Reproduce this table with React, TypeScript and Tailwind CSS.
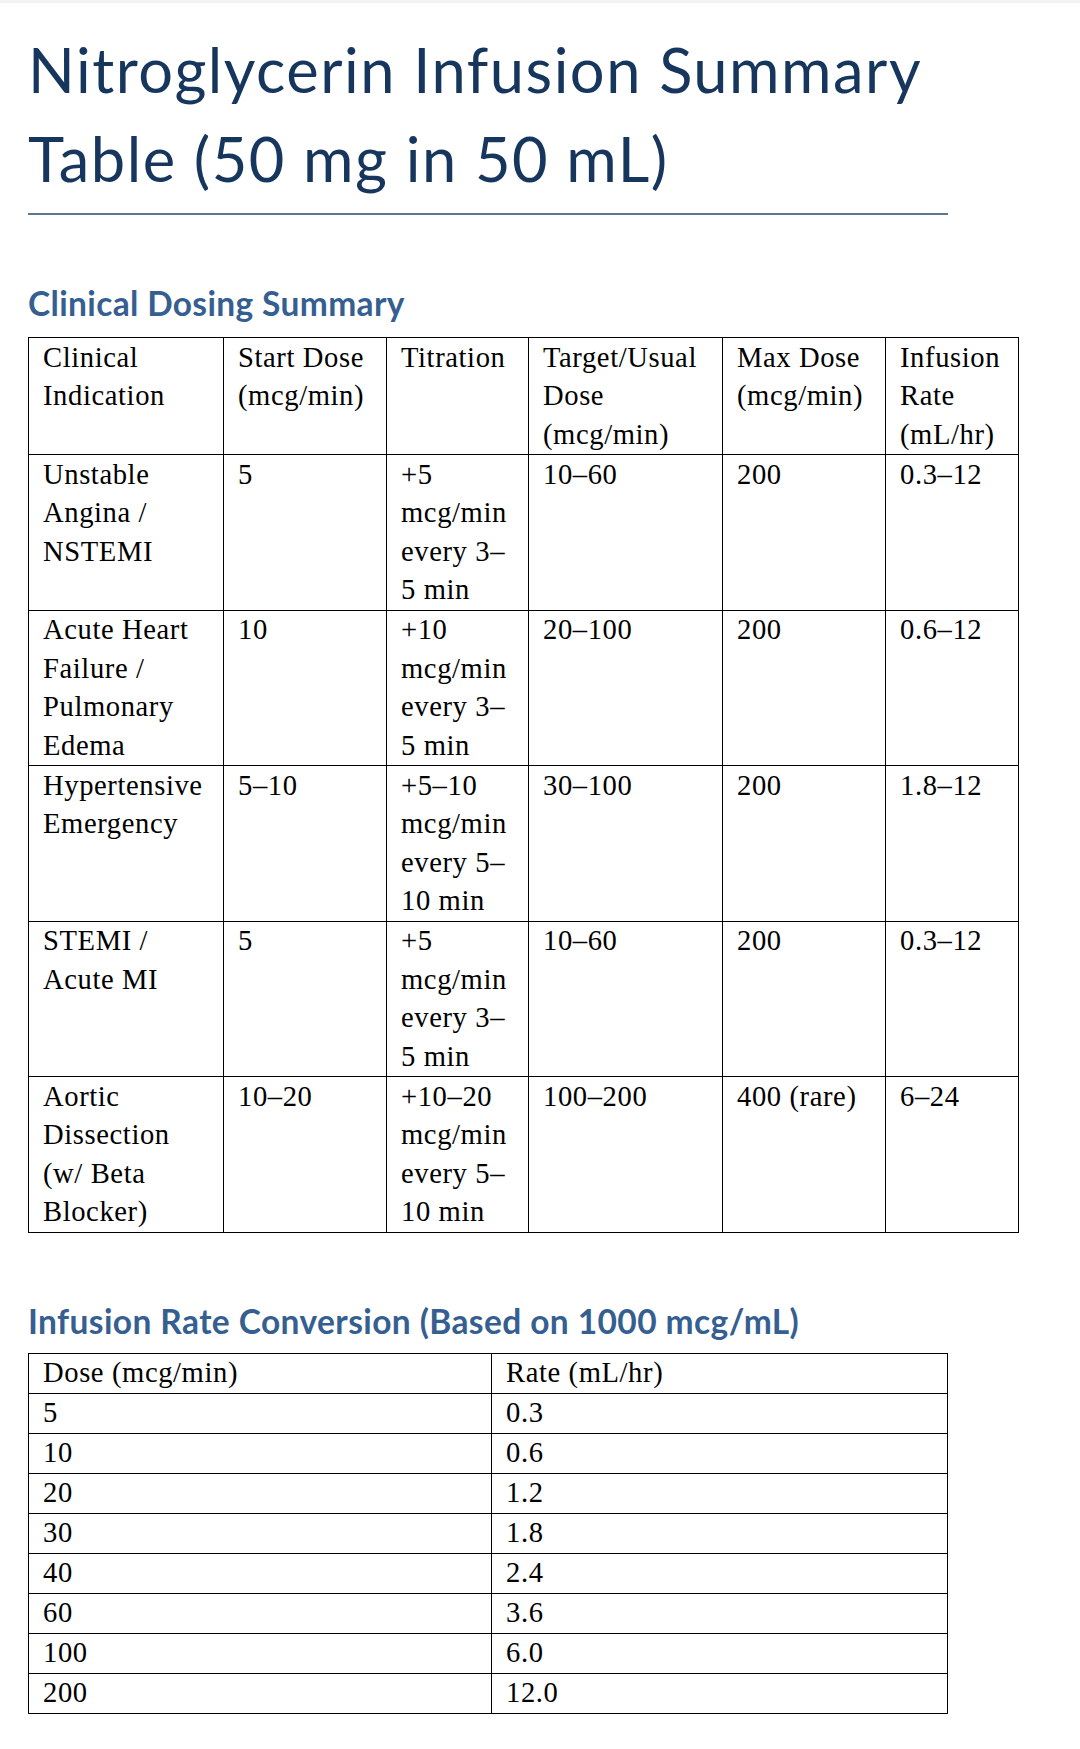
import React from "react";

// Clinical dosing rows: each cell is a list of lines as wrapped in the source doc
const dosingHeader = [
  ["Clinical", "Indication"],
  ["Start Dose", "(mcg/min)"],
  ["Titration"],
  ["Target/Usual", "Dose", "(mcg/min)"],
  ["Max Dose", "(mcg/min)"],
  ["Infusion", "Rate", "(mL/hr)"],
];

const dosingRows = [
  [
    ["Unstable", "Angina /", "NSTEMI"],
    ["5"],
    ["+5", "mcg/min", "every 3–", "5 min"],
    ["10–60"],
    ["200"],
    ["0.3–12"],
  ],
  [
    ["Acute Heart", "Failure /", "Pulmonary", "Edema"],
    ["10"],
    ["+10", "mcg/min", "every 3–", "5 min"],
    ["20–100"],
    ["200"],
    ["0.6–12"],
  ],
  [
    ["Hypertensive", "Emergency"],
    ["5–10"],
    ["+5–10", "mcg/min", "every 5–", "10 min"],
    ["30–100"],
    ["200"],
    ["1.8–12"],
  ],
  [
    ["STEMI /", "Acute MI"],
    ["5"],
    ["+5", "mcg/min", "every 3–", "5 min"],
    ["10–60"],
    ["200"],
    ["0.3–12"],
  ],
  [
    ["Aortic", "Dissection", "(w/ Beta", "Blocker)"],
    ["10–20"],
    ["+10–20", "mcg/min", "every 5–", "10 min"],
    ["100–200"],
    ["400 (rare)"],
    ["6–24"],
  ],
];

const colWidths = ["w-[195px]", "w-[163px]", "w-[142px]", "w-[194px]", "w-[163px]", "w-[133px]"];

const conversion = [
  ["5", "0.3"],
  ["10", "0.6"],
  ["20", "1.2"],
  ["30", "1.8"],
  ["40", "2.4"],
  ["60", "3.6"],
  ["100", "6.0"],
  ["200", "12.0"],
];

const cellText =
  "font-['Liberation_Serif',serif] text-[28.6px] leading-[38.5px] tracking-[0.6px] text-black";

function Cell({ lines }: { lines: string[] }) {
  return (
    <td className={`border border-black align-top pl-[14px] pr-[4px] pt-[0.5px] pb-0 ${cellText}`}>
      {lines.map((l, i) => (
        <span key={i} className="block whitespace-nowrap">
          {l}
        </span>
      ))}
    </td>
  );
}

export default function App() {
  return (
    <main className="min-h-screen bg-white border-t-[3px] border-[#f3f3f3]">
      <div className="pl-[28px] pt-[22px]">
        {/* title */}
        <h1 className="w-[920px] border-b-2 border-[#5b7792] pb-[10px] font-['Lato',sans-serif] text-[61.4px] leading-[89px] tracking-[1.5px] text-[#17365d]">
          Nitroglycerin Infusion Summary Table (50 mg in 50 mL)
        </h1>

        {/* clinical dosing */}
        <h2 className="mt-[68px] mb-[14px] font-['Lato',sans-serif] font-bold text-[33.5px] leading-[40px] tracking-[0.35px] text-[#365f91]">
          Clinical Dosing Summary
        </h2>
        <table className="table-fixed border-collapse w-[990px]">
          <colgroup>
            {colWidths.map((w, i) => (
              <col key={i} className={w} />
            ))}
          </colgroup>
          <thead>
            <tr>
              {dosingHeader.map((h, i) => (
                <Cell key={i} lines={h} />
              ))}
            </tr>
          </thead>
          <tbody>
            {dosingRows.map((row, r) => (
              <tr key={r}>
                {row.map((c, i) => (
                  <Cell key={i} lines={c} />
                ))}
              </tr>
            ))}
          </tbody>
        </table>

        {/* conversion */}
        <h2 className="mt-[68px] mb-[12px] font-['Lato',sans-serif] font-bold text-[33.5px] leading-[40px] tracking-[0.4px] text-[#365f91]">
          Infusion Rate Conversion (Based on 1000 mcg/mL)
        </h2>
        <table className="table-fixed border-collapse w-[919px]">
          <colgroup>
            <col className="w-[463px]" />
            <col className="w-[456px]" />
          </colgroup>
          <thead>
            <tr>
              <Cell lines={["Dose (mcg/min)"]} />
              <Cell lines={["Rate (mL/hr)"]} />
            </tr>
          </thead>
          <tbody>
            {conversion.map(([d, r]) => (
              <tr key={d}>
                <Cell lines={[d]} />
                <Cell lines={[r]} />
              </tr>
            ))}
          </tbody>
        </table>
      </div>
    </main>
  );
}
